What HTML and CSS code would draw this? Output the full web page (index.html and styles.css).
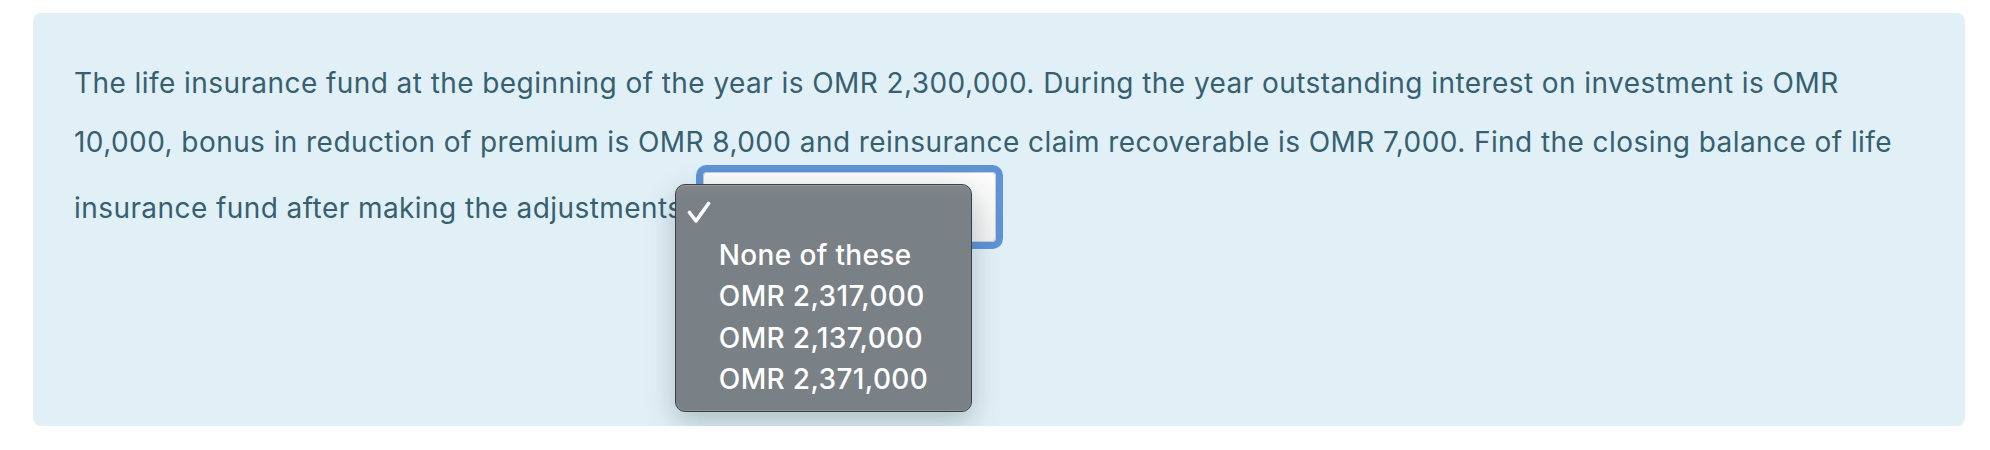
FILE: index.html
```html
<!DOCTYPE html>
<html lang="en">
<head>
<meta charset="utf-8">
<title>Question</title>
<link rel="stylesheet" href="styles.css">
</head>
<body>
<div class="panel">
  <p class="question">The life insurance fund at the beginning of the year is OMR 2,300,000. During the year outstanding interest on investment is OMR<br>10,000, bonus in reduction of premium is OMR 8,000 and reinsurance claim recoverable is OMR 7,000. Find the closing balance of life<br>insurance fund after making the adjustments <span class="select"><span class="menu"><svg class="check" width="24" height="22" viewBox="0 0 24 22"><polyline points="2.5,11.5 9,20 21.5,2.5" fill="none" stroke="#ffffff" stroke-width="3.6" stroke-linecap="round" stroke-linejoin="round"/></svg><span class="opt"></span><span class="opt">None of these</span><span class="opt">OMR 2,317,000</span><span class="opt">OMR 2,137,000</span><span class="opt">OMR 2,371,000</span></span></span></p>
</div>
</body>
</html>
```
FILE: styles.css
```css
html, body {
  margin: 0;
  padding: 0;
  background: #ffffff;
}
body {
  font-family: Inter, "Noto Sans", sans-serif;
}
.panel {
  box-sizing: border-box;
  margin: 13px 25px 0 33px;
  min-height: 413px;
  padding: 41px 41px 41px 41px;
  background: #e1f0f7;
  border-radius: 8px;
}
.question {
  margin: 0;
  font-size: 28px;
  line-height: 59px;
  letter-spacing: 0.43px;
  color: #365f70;
  white-space: nowrap;
}
.select {
  position: relative;
  display: inline-block;
  box-sizing: border-box;
  width: 293px;
  height: 70px;
  margin-left: 12px;
  vertical-align: -24px;
  border: 1px solid #c9cccf;
  border-radius: 4px;
  background: linear-gradient(#fcfcfc, #f1f1f1);
  box-shadow: 0 0 0 7px #5f93d6;
  letter-spacing: 0;
}
.menu {
  position: absolute;
  left: -29px;
  top: 11px;
  box-sizing: border-box;
  width: 297px;
  height: 228px;
  padding: 8px 0;
  display: flex;
  flex-direction: column;
  background: linear-gradient(#80868a 0, #7a8186 12px, #7a8186 100%);
  border: 1px solid #3b3f42;
  border-radius: 10px;
  box-shadow: inset 0 1px 0 rgba(255,255,255,0.18), inset 0 -1px 0 rgba(255,255,255,0.12), 0 10px 28px rgba(40,60,70,0.28);
}
.check {
  position: absolute;
  left: 11px;
  top: 16px;
}
.opt {
  display: block;
  height: 41.5px;
  padding-left: 43px;
  font-size: 28px;
  line-height: 41.5px;
  font-weight: 500;
  letter-spacing: 0.35px;
  color: #ffffff;
  white-space: nowrap;
}
```
